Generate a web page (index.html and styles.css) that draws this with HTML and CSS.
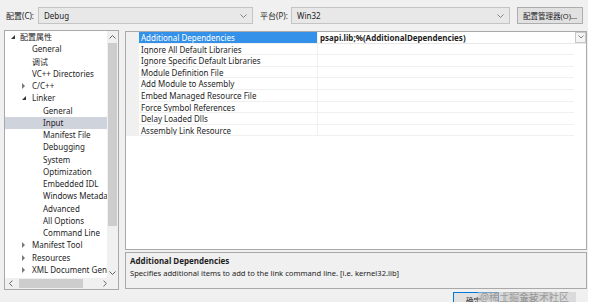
FILE: index.html
```html
<!DOCTYPE html>
<html lang="zh">
<head>
    <meta charset="UTF-8">
    <title>Linker Input</title>
    <link rel="stylesheet" href="styles.css">
</head>
<body>
    <div class="dialog">
        <div class="toolbar">
            <span class="label">配置(C):</span>
            <div class="combo combo-config">
                <span>Debug</span>
                <svg class="chev" width="7" height="4" viewBox="0 0 7 4"><path d="M0.5 0.5 L3.5 3.5 L6.5 0.5" fill="none" stroke="#777" stroke-width="0.9"/></svg>
            </div>
            <span class="label label-platform">平台(P):</span>
            <div class="combo combo-platform">
                <span>Win32</span>
                <svg class="chev" width="7" height="4" viewBox="0 0 7 4"><path d="M0.5 0.5 L3.5 3.5 L6.5 0.5" fill="none" stroke="#777" stroke-width="0.9"/></svg>
            </div>
            <button class="btn btn-manager">配置管理器(O)...</button>
        </div>

        <div class="main">
            <div class="tree-panel">
                <div class="tree-body">
                    <ul class="tree">
                        <li class="lvl0"><span class="arrow open"></span>配置属性</li>
                        <li class="lvl1">General</li>
                        <li class="lvl1">调试</li>
                        <li class="lvl1">VC++ Directories</li>
                        <li class="lvl1"><span class="arrow closed"></span>C/C++</li>
                        <li class="lvl1"><span class="arrow open"></span>Linker</li>
                        <li class="lvl2">General</li>
                        <li class="lvl2 selected">Input</li>
                        <li class="lvl2">Manifest File</li>
                        <li class="lvl2">Debugging</li>
                        <li class="lvl2">System</li>
                        <li class="lvl2">Optimization</li>
                        <li class="lvl2">Embedded IDL</li>
                        <li class="lvl2">Windows Metadata</li>
                        <li class="lvl2">Advanced</li>
                        <li class="lvl2">All Options</li>
                        <li class="lvl2">Command Line</li>
                        <li class="lvl1"><span class="arrow closed"></span>Manifest Tool</li>
                        <li class="lvl1"><span class="arrow closed"></span>Resources</li>
                        <li class="lvl1"><span class="arrow closed"></span>XML Document Generator</li>
                    </ul>
                    <div class="vscroll">
                        <svg class="sb-arrow" width="7" height="4" viewBox="0 0 7 4"><path d="M0.5 3.5 L3.5 0.5 L6.5 3.5" fill="none" stroke="#606060" stroke-width="1"/></svg>
                        <div class="vthumb"></div>
                        <div class="vtrack"></div>
                        <svg class="sb-arrow" width="7" height="4" viewBox="0 0 7 4"><path d="M0.5 0.5 L3.5 3.5 L6.5 0.5" fill="none" stroke="#606060" stroke-width="1"/></svg>
                    </div>
                </div>
                <div class="hscroll">
                    <svg width="4" height="7" viewBox="0 0 4 7"><path d="M3.5 0.5 L0.5 3.5 L3.5 6.5" fill="none" stroke="#606060" stroke-width="1"/></svg>
                    <div class="hthumb"></div>
                    <svg width="4" height="7" viewBox="0 0 4 7"><path d="M0.5 0.5 L3.5 3.5 L0.5 6.5" fill="none" stroke="#606060" stroke-width="1"/></svg>
                </div>
            </div>

            <div class="right">
                <div class="grid">
                    <div class="row selected">
                        <div class="name">Additional Dependencies</div>
                        <div class="value">
                            <span>psapi.lib;%(AdditionalDependencies)</span>
                            <span class="drop">
                                <svg width="6" height="4" viewBox="0 0 6 4"><path d="M0.5 0.5 L3 3 L5.5 0.5" fill="none" stroke="#666" stroke-width="0.8"/></svg>
                            </span>
                        </div>
                    </div>
                    <div class="row"><div class="name">Ignore All Default Libraries</div><div class="value"></div></div>
                    <div class="row"><div class="name">Ignore Specific Default Libraries</div><div class="value"></div></div>
                    <div class="row"><div class="name">Module Definition File</div><div class="value"></div></div>
                    <div class="row"><div class="name">Add Module to Assembly</div><div class="value"></div></div>
                    <div class="row"><div class="name">Embed Managed Resource File</div><div class="value"></div></div>
                    <div class="row"><div class="name">Force Symbol References</div><div class="value"></div></div>
                    <div class="row"><div class="name">Delay Loaded Dlls</div><div class="value"></div></div>
                    <div class="row"><div class="name">Assembly Link Resource</div><div class="value"></div></div>
                </div>
                <div class="desc">
                    <div class="desc-title">Additional Dependencies</div>
                    <div class="desc-text">Specifies additional items to add to the link command line. [i.e. kernel32.lib]</div>
                </div>
            </div>
        </div>

        <div class="footer">
            <button class="btn btn-ok">确定</button>
            <button class="btn">取消</button>
        </div>
    </div>
    <div class="watermark">@稀土掘金技术社区</div>
</body>
</html>
```

FILE: styles.css
```css
body {
    margin: 0;
    width: 616px;
    height: 302px;
    overflow: hidden;
    background-color: #ffffff;
    font-family: "Noto Sans", "Noto Sans CJK SC", sans-serif;
    font-size: 8px;
    color: #1e1e1e;
    position: relative;
}

.dialog {
    width: 588px;
    height: 302px;
    background-color: #f0f0f0;
    display: flex;
    flex-direction: column;
    overflow: hidden;
}

/* верхняя строка с комбобоксами */
.toolbar {
    height: 30px;
    flex-shrink: 0;
    display: flex;
    align-items: center;
    padding-left: 6px;
    box-sizing: border-box;
    padding-top: 1px;
}

.label {
    width: 32px;
}

.label-platform {
    margin-left: 7px;
    width: 31px;
}

.combo {
    height: 17px;
    box-sizing: border-box;
    border: 1px solid #c4c4c4;
    background-color: #e8e8e8;
    display: flex;
    align-items: center;
    justify-content: space-between;
    padding: 0 5px 0 5px;
}

.combo-config {
    width: 215px;
}

.combo-platform {
    width: 219px;
}

.btn {
    height: 17px;
    box-sizing: border-box;
    border: 1px solid #adadad;
    background-color: #e1e1e1;
    font-family: "Noto Sans", "Noto Sans CJK SC", sans-serif;
    font-size: 7.5px;
    color: #1e1e1e;
    padding: 0;
}

.btn-manager {
    margin-left: 7px;
    width: 66px;
}

/* основная область */
.main {
    display: flex;
    flex-shrink: 0;
    gap: 6px;
    padding-left: 4px;
    height: 260px;
}

.tree-panel {
    width: 115px;
    height: 260px;
    box-sizing: border-box;
    border: 1px solid #a9a9a9;
    background-color: #ffffff;
    display: flex;
    flex-direction: column;
}

.tree-body {
    flex: 1;
    display: flex;
    min-height: 0;
}

.tree {
    list-style: none;
    margin: 0;
    padding: 0;
    flex: 1;
    overflow: hidden;
    white-space: nowrap;
}

.tree li {
    height: 12.25px;
    line-height: 12.25px;
    position: relative;
    overflow: hidden;
}

.lvl0 { padding-left: 15px; }
.lvl1 { padding-left: 27px; }
.lvl2 { padding-left: 38px; }

.tree li.selected {
    background-color: #cfd3dc;
}

.arrow {
    position: absolute;
    top: 4px;
}

.lvl0 .arrow { left: 6px; }
.lvl1 .arrow { left: 17px; }

.arrow.open {
    width: 0;
    height: 0;
    border-left: 4px solid transparent;
    border-bottom: 4px solid #333;
}

.arrow.closed {
    width: 0;
    height: 0;
    border-top: 3px solid transparent;
    border-bottom: 3px solid transparent;
    border-left: 3px solid #777;
    top: 3px;
}

.vscroll {
    width: 11px;
    background-color: #f0f0f0;
    display: flex;
    flex-direction: column;
    align-items: center;
    padding: 4px 0 3px;
    box-sizing: border-box;
}

.vthumb {
    width: 9px;
    height: 183px;
    margin-top: 4px;
    background-color: #cdcdcd;
}

.vtrack {
    flex: 1;
}

.hscroll {
    height: 11px;
    background-color: #f0f0f0;
    display: flex;
    align-items: center;
    padding: 0 11px 0 4px;
    gap: 6px;
}

.hthumb {
    width: 67px;
    height: 9px;
    background-color: #cdcdcd;
    margin-right: 14px;
}

/* сетка свойств */
.right {
    width: 462px;
    display: flex;
    flex-direction: column;
    gap: 2px;
    padding-top: 1px;
}

.grid {
    height: 219px;
    flex-shrink: 0;
    box-sizing: border-box;
    border: 1px solid #a9a9a9;
    background-color: #ffffff;
}

.row {
    display: flex;
    height: 11.6px;
    line-height: 11px;
    border-left: 13px solid #f0f0f0;
}

.name {
    width: 179px;
    padding-left: 2px;
    box-sizing: border-box;
    border-bottom: 1px solid #f0f0f0;
    border-right: 1px solid #f0f0f0;
    white-space: nowrap;
    overflow: hidden;
}

.value {
    flex: 1;
    display: flex;
    justify-content: space-between;
    align-items: center;
    padding-left: 2px;
    border-bottom: 1px solid #f0f0f0;
    font-weight: bold;
    margin-right: 12px;
}

.row.selected .name {
    background-color: #3391e9;
    color: #ffffff;
}

.row.selected .value {
    margin-right: 0;
    border-bottom-color: #e8e8e8;
}

.drop {
    width: 11px;
    height: 11px;
    box-sizing: border-box;
    border: 1px solid #c8c8c8;
    background-color: #f4f4f4;
    display: flex;
    align-items: center;
    justify-content: center;
}

.desc {
    height: 37px;
    flex-shrink: 0;
    box-sizing: border-box;
    border: 1px solid #a9a9a9;
    background-color: #f0f0f0;
    padding: 2px 4px;
    line-height: 12px;
}

.desc-title {
    font-weight: bold;
}

.desc-text {
    font-size: 7.6px;
}

/* нижние кнопки */
.footer {
    display: flex;
    flex-shrink: 0;
    gap: 6px;
    padding-left: 453px;
    padding-top: 2px;
}

.footer .btn {
    width: 46px;
    height: 16px;
}

.btn-ok {
    border-color: #0078d7;
    text-align: left;
    padding-left: 12px;
}

.watermark {
    position: absolute;
    left: 478px;
    top: 292px;
    width: 98px;
    height: 12px;
    background-color: rgba(200, 200, 200, 0.55);
    color: #9a9a9a;
    font-size: 10px;
    line-height: 11px;
    padding-left: 2px;
    box-sizing: border-box;
}
```
